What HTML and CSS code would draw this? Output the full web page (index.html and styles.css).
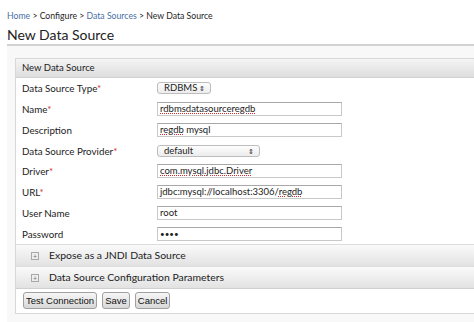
FILE: index.html
```html
<!DOCTYPE html>
<html>
<head>
<meta charset="utf-8">
<link rel="stylesheet" href="styles.css">
</head>
<body>
<div class="breadcrumb"><a class="link">Home</a> &gt; Configure &gt; <a class="link">Data Sources</a> &gt; New Data Source</div>
<h1 class="title">New Data Source</h1>
<div class="outer">
  <div class="panel">
    <div class="panel-head">New Data Source</div>
    <div class="form">
      <div class="row"><div class="label">Data Source Type<span class="req">*</span></div><div class="select sel-type">RDBMS<span class="arrows">&#8661;</span></div></div>
      <div class="row"><div class="label">Name<span class="req">*</span></div><div class="field"><span class="sp">rdbmsdatasourceregdb</span></div></div>
      <div class="row"><div class="label">Description</div><div class="field"><span class="sp">regdb</span> mysql</div></div>
      <div class="row"><div class="label">Data Source Provider<span class="req">*</span></div><div class="select sel-prov">default<span class="arrows">&#8661;</span></div></div>
      <div class="row"><div class="label">Driver<span class="req">*</span></div><div class="field"><span class="sp">com.mysql.jdbc.Driver</span></div></div>
      <div class="row"><div class="label">URL<span class="req">*</span></div><div class="field">jdbc:mysql://localhost:3306/<span class="sp">regdb</span></div></div>
      <div class="row"><div class="label">User Name</div><div class="field">root</div></div>
      <div class="row"><div class="label">Password</div><div class="field pw">&#8226;&#8226;&#8226;&#8226;</div></div>
    </div>
    <div class="section"><span class="plus">+</span>Expose as a JNDI Data Source</div>
    <div class="section"><span class="plus">+</span>Data Source Configuration Parameters</div>
    <div class="buttons">
      <button class="btn">Test Connection</button>
      <button class="btn">Save</button>
      <button class="btn">Cancel</button>
    </div>
  </div>
</div>
</body>
</html>
```
FILE: styles.css
```css
html, body {
  margin: 0;
  padding: 0;
  background: #ffffff;
  font-family: Lato, "Open Sans", sans-serif;
  color: #222;
}
.breadcrumb {
  padding: 9px 0 0 7px;
  height: 14px;
  font-size: 8.7px;
  line-height: 14px;
  color: #1e1e1e;
}
.link {
  color: #4a6fa5;
}
.title {
  margin: 0 0 0 7px;
  padding: 2px 0 0 0;
  height: 19px;
  font-size: 14px;
  line-height: 19px;
  font-weight: normal;
  color: #222;
  border-bottom: 2px solid #d2d2d2;
}
.outer {
  margin: 0 0 0 7px;
  padding: 12px 0 8px 8px;
  background: #f8f8f8;
}
.panel {
  background: #fff;
  border: 1px solid #d8d8d8;
  border-right: none;
}
.panel-head {
  height: 18px;
  line-height: 18px;
  padding-left: 6px;
  font-size: 9.5px;
  background: linear-gradient(#f4f4f4, #dedede);
  border-bottom: 1px solid #d0d0d0;
}
.form {
  padding: 0 0 0 6px;
}
.row {
  display: flex;
  align-items: center;
  height: 20.75px;
}
.label {
  width: 135px;
  font-size: 9.8px;
}
.req {
  color: #d0312d;
}
.field {
  box-sizing: border-box;
  width: 185px;
  height: 14px;
  border: 1px solid #c8c8c8;
  border-top-color: #a8a8a8;
  font-size: 9.5px;
  line-height: 12px;
  padding-left: 2px;
  color: #222;
}
.pw {
  font-size: 8px;
}
.sp {
  text-decoration: underline dotted #d03030;
}
.select {
  box-sizing: border-box;
  height: 12px;
  border: 1px solid #bdbdbd;
  border-radius: 3px;
  background: linear-gradient(#fdfdfd, #ececec);
  font-size: 9.5px;
  line-height: 10px;
  padding-left: 6px;
  position: relative;
}
.sel-type { width: 54px; }
.sel-prov { width: 103px; }
.arrows {
  position: absolute;
  right: 5px;
  top: 0;
  font-size: 7px;
}
.section {
  height: 21px;
  line-height: 21px;
  font-size: 10.4px;
  border-top: 1px solid #dcdcdc;
  background: linear-gradient(#fafafa, #e2e2e2);
  display: flex;
  align-items: center;
}
.plus {
  box-sizing: border-box;
  width: 8px;
  height: 8px;
  border: 1px solid #a8a8a8;
  margin: 0 10px 0 15px;
  font-size: 7px;
  line-height: 6px;
  text-align: center;
  color: #777;
  background: #eee;
}
.buttons {
  display: flex;
  gap: 5px;
  padding: 3px 0 4px 7px;
  border-top: 1px solid #d0d0d0;
}
.btn {
  height: 17px;
  padding: 0 2px;
  font-family: "Liberation Sans", Arial, sans-serif;
  font-size: 9.5px;
  border: 1px solid #a0a0a0;
  border-radius: 3px;
  background: linear-gradient(#f6f6f6, #d8d8d8);
  color: #111;
}
```
